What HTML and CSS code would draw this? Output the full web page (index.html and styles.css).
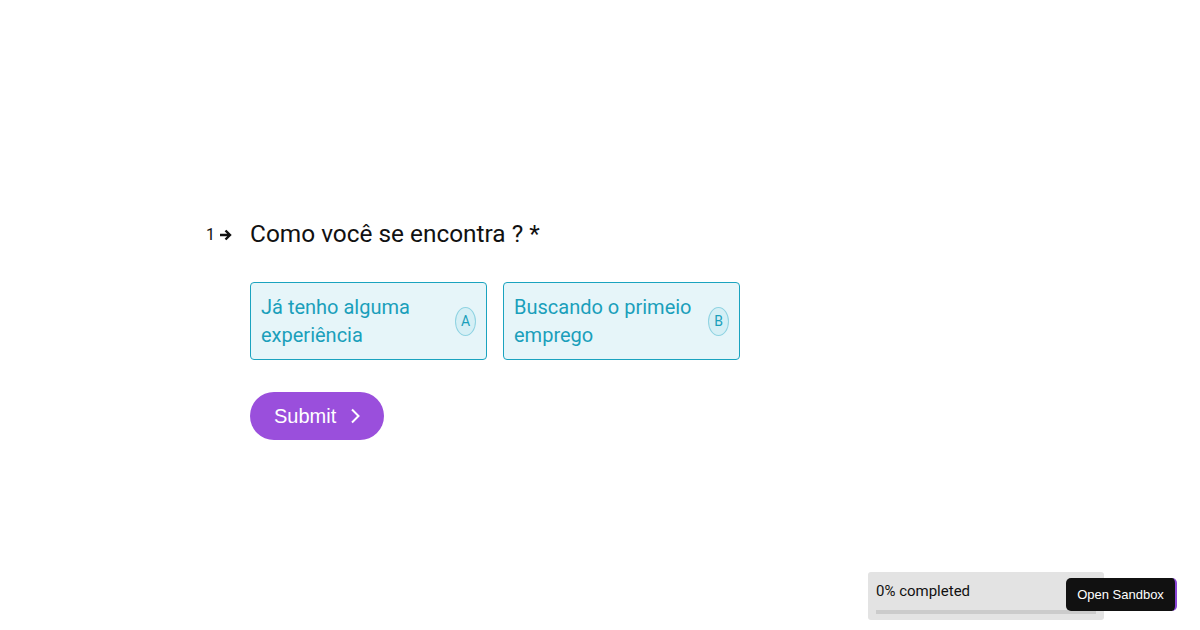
FILE: index.html
```html
<!DOCTYPE html>
<html lang="pt">
<head>
<meta charset="utf-8">
<link rel="stylesheet" href="styles.css">
</head>
<body>
<main class="page">
  <section class="question">
    <div class="qnum"><span>1</span>
      <svg class="arrow" width="14" height="12" viewBox="0 0 14 12"><path d="M1 6h10M6.5 1.5L11 6 6.5 10.5" fill="none" stroke="#111" stroke-width="2.4"/></svg>
    </div>
    <div class="qbody">
      <h1 class="qtitle">Como você se encontra ? *</h1>
      <div class="options">
        <div class="option"><span class="opt-text">Já tenho alguma experiência</span><span class="badge">A</span></div>
        <div class="option"><span class="opt-text">Buscando o primeio emprego</span><span class="badge">B</span></div>
      </div>
      <button class="submit">Submit
        <svg width="12" height="16" viewBox="0 0 12 16"><path d="M3 1.5L9.5 8 3 14.5" fill="none" stroke="#fff" stroke-width="2"/></svg>
      </button>
    </div>
  </section>
</main>
<div class="progress">
  <div class="progress-label">0% completed</div>
  <div class="progress-track"></div>
</div>
<a class="sandbox">Open Sandbox</a>
</body>
</html>
```

FILE: styles.css
```css
html, body {
  margin: 0;
  padding: 0;
  background: #fff;
  font-family: Roboto, "Noto Sans", sans-serif;
}
.page {
  width: 1200px;
  height: 630px;
  box-sizing: border-box;
  padding: 218px 0 0 206px;
}
.question {
  display: flex;
  align-items: flex-start;
}
.qnum {
  width: 44px;
  height: 32px;
  display: flex;
  align-items: center;
  gap: 4px;
  font-size: 16px;
  color: #111;
}
.arrow { margin-top: 1px; }
.qbody {
  display: flex;
  flex-direction: column;
  align-items: flex-start;
}
.qtitle {
  margin: 0;
  font-size: 24.4px;
  line-height: 32px;
  font-weight: 400;
  color: #111;
}
.options {
  display: flex;
  gap: 16px;
  margin-top: 32px;
}
.option {
  width: 237px;
  height: 78px;
  box-sizing: border-box;
  border: 1px solid #1aa3bf;
  border-radius: 4px;
  background: #e6f5f9;
  padding: 10px 10px;
  display: flex;
  align-items: center;
  justify-content: space-between;
  color: #1a9fbb;
}
.opt-text {
  font-size: 20px;
  line-height: 28px;
  width: 190px;
}
.badge {
  width: 21px;
  height: 29px;
  box-sizing: border-box;
  border: 1px solid #8fd3e2;
  border-radius: 50%;
  background: #d5eff5;
  font-size: 14px;
  line-height: 27px;
  text-align: center;
  color: #1a9fbb;
  flex: none;
}
.submit {
  margin-top: 32px;
  height: 48px;
  width: 134px;
  border: none;
  border-radius: 24px;
  background: #9a4fdc;
  color: #fff;
  font-family: "Liberation Sans", Arial, sans-serif;
  font-size: 20px;
  display: flex;
  align-items: center;
  padding: 0 0 0 24px;
  gap: 13px;
}
.progress {
  position: absolute;
  left: 868px;
  top: 572px;
  width: 236px;
  height: 48px;
  box-sizing: border-box;
  background: #e3e3e3;
  border-radius: 3px;
  padding: 9px 8px 0 8px;
}
.progress-label {
  font-size: 15px;
  line-height: 20px;
  color: #111;
}
.progress-track {
  margin-top: 9px;
  height: 4px;
  background: #cbcbcb;
}
.sandbox {
  position: absolute;
  left: 1066px;
  top: 578px;
  width: 111px;
  height: 33px;
  box-sizing: border-box;
  background: #111;
  border-radius: 5px;
  border-right: 2px solid #8a45d6;
  color: #fff;
  font-family: "Liberation Sans", Arial, sans-serif;
  font-size: 13px;
  line-height: 33px;
  text-align: center;
}
```
